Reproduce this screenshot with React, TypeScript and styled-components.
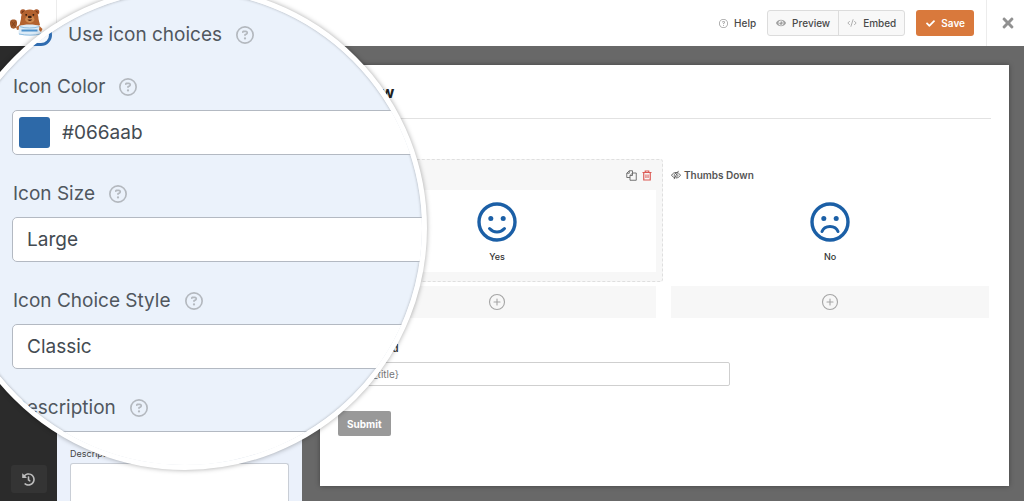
import React from "react";
import styled, { createGlobalStyle, css } from "styled-components";
import { FaCheck, FaEye, FaHistory, FaTimes } from "react-icons/fa";
import { FaRegCircleQuestion } from "react-icons/fa6";
import { CirclePlus, CodeXml } from "lucide-react";

const blue = "#1b5fa6";

const GlobalStyle = createGlobalStyle`
  *, *::before, *::after { box-sizing: border-box; }
  body {
    margin: 0;
    font-family: Inter, "Liberation Sans", sans-serif;
    font-size: 10px;
    color: #444;
    background: #fff;
  }
  button, input, select, textarea { font: inherit; color: inherit; margin: 0; }
  button { cursor: pointer; }
  svg { display: block; flex: none; }
`;

const Page = styled.div`
  position: relative;
  display: flex;
  flex-direction: column;
  height: 100vh;
  overflow: hidden;
`;

const Header = styled.header`
  display: flex;
  align-items: stretch;
  flex: none;
  height: 46px;
  background: #fff;
`;

const LogoBox = styled.div`
  width: 57px;
  padding: 7px 0 0 9px;
  border-right: 1px solid #ececec;
`;

const Toolbar = styled.div`
  display: flex;
  align-items: center;
  flex: 1;
  justify-content: flex-end;
  gap: 11px;
  padding-right: 12px;
`;

const toolButton = css`
  display: flex;
  align-items: center;
  gap: 6px;
  height: 26px;
  padding: 0 8px;
  border: 0;
  background: none;
  font-size: 10px;
  font-weight: 500;
  color: #4a4a4a;
  svg { color: #a0a0a0; }
`;

const ToolButton = styled.button`
  ${toolButton}
`;

const HelpLink = styled.a`
  ${toolButton}
  padding: 0;
  text-decoration: none;
`;

const ButtonGroup = styled.div`
  display: flex;
  border: 1px solid #dcdcdc;
  border-radius: 3px;
  background: #f8f8f8;
  ${ToolButton} { height: 24px; }
  ${ToolButton} + ${ToolButton} { border-left: 1px solid #dcdcdc; }
`;

const SaveButton = styled.button`
  ${toolButton}
  padding: 0 9px 0 10px;
  border-radius: 3px;
  background: #d9793c;
  color: #fff;
  font-weight: 600;
  svg { color: #fff; }
`;

const CloseButton = styled.button`
  display: flex;
  align-items: center;
  justify-content: center;
  width: 38px;
  padding: 0 0 0 4px;
  border: 0;
  border-left: 1px solid #ececec;
  background: none;
  svg { color: #919191; }
`;

const Body = styled.div`
  display: flex;
  flex: 1;
  min-height: 0;
`;

const Rail = styled.nav`
  display: flex;
  flex-direction: column;
  justify-content: flex-end;
  align-items: center;
  width: 57px;
  padding-bottom: 8px;
  background: #2b2b2b;
`;

const RailButton = styled.button`
  display: flex;
  align-items: center;
  justify-content: center;
  width: 36px;
  height: 28px;
  border: 0;
  border-radius: 3px;
  background: #343434;
  color: #bcbcbc;
`;

const Panel = styled.aside`
  display: flex;
  flex-direction: column;
  justify-content: flex-end;
  width: 245px;
  padding: 0 13px;
  background: #ebf1fb;
`;

const PanelLabel = styled.label`
  font-size: 9px;
  line-height: 12px;
  margin-bottom: 3px;
`;

const PanelText = styled.textarea`
  display: block;
  width: 100%;
  height: 38px;
  padding: 4px;
  border: 1px solid #c9ced6;
  border-bottom: 0;
  border-radius: 3px 3px 0 0;
  background: #fff;
  resize: none;
`;

const Canvas = styled.main`
  display: flex;
  flex: 1;
  min-width: 0;
  padding: 19px 15px 15px 18px;
  background: #686868;
`;

const Sheet = styled.section`
  flex: 1;
  min-width: 0;
  padding: 17px 18px;
  background: #fff;
  box-shadow: 0 0 5px rgba(0, 0, 0, 0.35);
`;

const FormTitle = styled.h1`
  margin: 0 0 40px;
  padding-bottom: 16px;
  border-bottom: 1px solid #e2e2e2;
  font-size: 16px;
  line-height: 20px;
  font-weight: 700;
  color: #222;
`;

const Columns = styled.div`
  display: flex;
  gap: 15px;
  padding-right: 2px;
`;

const Column = styled.div`
  display: flex;
  flex-direction: column;
  flex: 1;
  min-width: 0;
  gap: 4px;
`;

const FieldCard = styled.div<{ $selected?: boolean }>`
  height: 123px;
  margin: 0 -7px 0 -9px;
  padding: 0 6px 9px 8px;
  border: 1px dashed ${(p) => (p.$selected ? "#dfdfdf" : "transparent")};
  border-radius: 3px;
  background: ${(p) => (p.$selected ? "#f7f7f7" : "transparent")};
`;

const FieldHead = styled.div`
  display: flex;
  align-items: center;
  justify-content: space-between;
  height: 30px;
  padding-right: 4px;
`;

const FieldName = styled.span`
  display: flex;
  align-items: center;
  gap: 3px;
  font-size: 10px;
  font-weight: 600;
  color: #555;
`;

const FieldActions = styled.span`
  display: flex;
  gap: 5px;
`;

const IconButton = styled.button`
  padding: 0;
  border: 0;
  background: none;
`;

const Choice = styled.div`
  display: flex;
  flex-direction: column;
  align-items: center;
  gap: 9px;
  height: 82px;
  padding-top: 12px;
  background: #fff;
  font-size: 9px;
  line-height: 12px;
  font-weight: 500;
  color: #333;
  svg { color: ${blue}; }
`;

const AddButton = styled.button`
  display: flex;
  align-items: center;
  justify-content: center;
  height: 32px;
  padding: 0;
  border: 0;
  background: #f7f7f7;
  color: #a6a6a6;
`;

const FieldLabel = styled.label`
  display: block;
  margin: 23px 0 7px;
  font-size: 10px;
  line-height: 14px;
  font-weight: 600;
  color: #333;
`;

const TextInput = styled.input`
  display: block;
  width: 60%;
  height: 24px;
  padding: 0 6px;
  border: 1px solid #cfcfcf;
  border-radius: 2px;
  background: #fff;
  font-size: 10px;
  color: #777;
`;

const SubmitButton = styled.button`
  display: block;
  height: 25px;
  margin-top: 25px;
  padding: 0 9px;
  border: 0;
  border-radius: 2px;
  background: #999;
  color: #fff;
  font-size: 10px;
  font-weight: 700;
`;

/* Round magnifier that floats over the builder */
const Lens = styled.div`
  position: absolute;
  left: -57px;
  top: -14px;
  width: 484px;
  height: 484px;
  border: 5px solid #fff;
  border-radius: 50%;
  overflow: hidden;
  background: #ebf2fb;
  box-shadow: 0 0 5px rgba(0, 0, 0, 0.35), inset 0 0 3px rgba(0, 0, 0, 0.3);
  padding: 31px 0 0 65px;
  color: #50575e;
`;

const LensRow = styled.div`
  display: flex;
  align-items: center;
  gap: 14px;
  height: 26px;
  font-size: 19px;
  line-height: 26px;
  svg { color: #b4b9bf; }
`;

const Toggle = styled.input`
  appearance: none;
  && { margin-right: 2px; }
  width: 39px;
  height: 22px;
  border: 3px solid #2f6cb0;
  border-radius: 11px;
  background: #f4f8fd;
`;

const LensField = styled.div`
  margin-top: 26px;
`;

const LensBox = styled.div`
  display: flex;
  align-items: center;
  gap: 12px;
  height: 45px;
  margin: 10px -20px 0 -1px;
  padding: 0 6px;
  border: 1px solid #b3b9c2;
  border-radius: 5px;
  background: #fff;
  font-size: 19px;
  color: #444b52;
`;

const Swatch = styled.span`
  width: 31px;
  height: 31px;
  border-radius: 3px;
  background: #2d69a8;
`;

const LensInput = styled.input`
  flex: 1;
  min-width: 0;
  padding: 0;
  border: 0;
  outline: 0;
  background: none;
`;

const LensSelect = styled.select`
  flex: 1;
  appearance: none;
  padding: 0 8px;
  border: 0;
  outline: 0;
  background: none;
`;

const Bear = () => (
  <svg width="34" height="30" viewBox="0 0 34 30" role="img" aria-label="WPForms">
    <path d="M1.5 13.5c1-1.5 5-1.5 6 0 1 2 .5 5-.5 7-1 1.500-4 1.500-5 0-1-2-1.500-5-.5-7z" fill="#a35a2c" />
    <path d="M2.500 14.500l4 5M6.500 14.500l-4 5" stroke="#7a3d1b" strokeWidth="0.800" />
    <path d="M7 20l5-3 1 5-5 1z" fill="#b9652f" />
    <circle cx="14" cy="5" r="2.800" fill="#a85527" />
    <circle cx="27.500" cy="5" r="2.800" fill="#a85527" />
    <circle cx="14.200" cy="5.300" r="1.300" fill="#6f3517" />
    <circle cx="27.300" cy="5.300" r="1.300" fill="#6f3517" />
    <path d="M12 12c0-6 3-9.500 8.800-9.500S29.500 6 29.500 12l1.500 6c-3 3-17 3-20.500 0z" fill="#b3622f" />
    <ellipse cx="20.800" cy="12.300" rx="4.600" ry="3.600" fill="#cf8a50" />
    <circle cx="17.200" cy="7.800" r="0.900" fill="#2a1a12" />
    <circle cx="24.400" cy="7.800" r="0.900" fill="#2a1a12" />
    <ellipse cx="20.800" cy="10" rx="2" ry="1.300" fill="#3a2014" />
    <path d="M18.500 12.500c1.500 2 3.200 2 4.700 0z" fill="#5a2a18" />
    <path d="M10 19c5-2 16-2 21 0l1.500 8c-7 2-17 2-23 0z" fill="#dcebf7" />
    <path d="M12.500 23.500h16" stroke="#4f93cd" strokeWidth="2" />
    <path d="M10.500 19.500c5 2 15 2 20 0M10 27c7 1.500 15 1.500 22 0" stroke="#8dbce0" fill="none" />
    <path d="M30.500 19l3 3-1.500 3-2-2z" fill="#b9652f" />
  </svg>
);

const Face = ({ mouth }: { mouth: string }) => (
  <svg width="40" height="40" viewBox="0 0 40 40" fill="none" stroke="currentColor" strokeWidth="3.4">
    <circle cx="20" cy="20" r="18" />
    <path d={mouth} strokeWidth="3" strokeLinecap="round" />
    <circle cx="13.8" cy="16.6" r="2.500" fill="currentColor" stroke="none" />
    <circle cx="26.200" cy="16.6" r="2.500" fill="currentColor" stroke="none" />
  </svg>
);

const HiddenEyeIcon = () => (
  <svg width="10" height="10" viewBox="0 0 20 20" fill="none" stroke="currentColor" strokeWidth="1.800" strokeLinecap="round">
    <path d="M7.500 15.400C4.500 14.500 2.300 12.500 1 10.500 3 7 6.300 5 10 5h1.500" />
    <path d="M10.500 16c3.800-.3 6.700-2.500 8.500-5.500-.9-1.600-2.200-3-3.800-4" />
    <path d="M14.500 2.500l-8 15" />
    <path d="M7 12.500c-1.500-2.500-.3-5.500 2.500-6M13.800 9.500c.3 2-.7 3.500-2.300 4.200" />
  </svg>
);

const CopyIcon = () => (
  <svg width="11" height="11" viewBox="0 0 22 22" fill="none" stroke="#666" strokeWidth="1.800" strokeLinejoin="round">
    <path d="M8 15H1.500V6.500L6.500 1.500H13V6" />
    <path d="M6.500 1.500v5h-5" />
    <path d="M13 6h7.500v14.500H8V11z" />
    <path d="M13 6v5H8" />
  </svg>
);

const TrashIcon = () => (
  <svg width="10" height="11" viewBox="0 0 20 22" fill="none" stroke="#dc5a55" strokeWidth="2.400">
    <path d="M1 5h18M6.500 5V2h7v3M3.500 5v15h13V5" />
    <path d="M7.500 9v7M10 9v7M12.500 9v7" strokeWidth="1.500" />
  </svg>
);

const LensLabel = ({ htmlFor, children }: { htmlFor: string; children: React.ReactNode }) => (
  <LensRow>
    <label htmlFor={htmlFor}>{children}</label>
    <FaRegCircleQuestion size={18} />
  </LensRow>
);

export default function App() {
  return (
    <>
      <GlobalStyle />
      <Page>
        <Header>
          <LogoBox>
            <Bear />
          </LogoBox>
          <Toolbar>
            <HelpLink href="#help">
              <FaRegCircleQuestion size={9} />
              Help
            </HelpLink>
            <ButtonGroup>
              <ToolButton type="button">
                <FaEye size={10} />
                Preview
              </ToolButton>
              <ToolButton type="button">
                <CodeXml size={10} />
                Embed
              </ToolButton>
            </ButtonGroup>
            <SaveButton type="button">
              <FaCheck size={9} />
              Save
            </SaveButton>
          </Toolbar>
          <CloseButton type="button" aria-label="Close">
            <FaTimes size={16} />
          </CloseButton>
        </Header>
        <Body>
          <Rail>
            <RailButton type="button" aria-label="Revisions">
              <FaHistory size={13} />
            </RailButton>
          </Rail>
          <Panel>
            <PanelLabel htmlFor="panel-description">Description</PanelLabel>
            <PanelText id="panel-description" />
          </Panel>
          <Canvas>
            <Sheet>
              <FormTitle>Review</FormTitle>
              <Columns>
                <Column>
                  <FieldCard $selected>
                    <FieldHead>
                      <FieldName>
                        <HiddenEyeIcon />
                        Thumbs Up
                      </FieldName>
                      <FieldActions>
                        <IconButton type="button" aria-label="Duplicate">
                          <CopyIcon />
                        </IconButton>
                        <IconButton type="button" aria-label="Delete">
                          <TrashIcon />
                        </IconButton>
                      </FieldActions>
                    </FieldHead>
                    <Choice>
                      <Face mouth="M12.500 26.500c4 4.500 11 4.500 15 0" />
                      Yes
                    </Choice>
                  </FieldCard>
                  <AddButton type="button" aria-label="Add field to first column">
                    <CirclePlus size={18} strokeWidth={1.5} />
                  </AddButton>
                </Column>
                <Column>
                  <FieldCard>
                    <FieldHead>
                      <FieldName>
                        <HiddenEyeIcon />
                        Thumbs Down
                      </FieldName>
                    </FieldHead>
                    <Choice>
                      <Face mouth="M12 29.500c2.500-6.800 13.500-6.800 16 0" />
                      No
                    </Choice>
                  </FieldCard>
                  <AddButton type="button" aria-label="Add field to second column">
                    <CirclePlus size={18} strokeWidth={1.5} />
                  </AddButton>
                </Column>
              </Columns>
              <FieldLabel htmlFor="hidden-field">Hidden Field</FieldLabel>
              <TextInput id="hidden-field" defaultValue="{page_title}" />
              <SubmitButton type="button">Submit</SubmitButton>
            </Sheet>
          </Canvas>
        </Body>
        <Lens>
          <LensRow>
            <Toggle type="checkbox" id="use-icons" defaultChecked />
            <label htmlFor="use-icons">Use icon choices</label>
            <FaRegCircleQuestion size={18} />
          </LensRow>
          <LensField>
            <LensLabel htmlFor="icon-color">Icon Color</LensLabel>
            <LensBox>
              <Swatch />
              <LensInput id="icon-color" defaultValue="#066aab" />
            </LensBox>
          </LensField>
          <LensField>
            <LensLabel htmlFor="icon-size">Icon Size</LensLabel>
            <LensBox>
              <LensSelect id="icon-size">
                <option>Large</option>
              </LensSelect>
            </LensBox>
          </LensField>
          <LensField>
            <LensLabel htmlFor="icon-style">Icon Choice Style</LensLabel>
            <LensBox>
              <LensSelect id="icon-style">
                <option>Classic</option>
              </LensSelect>
            </LensBox>
          </LensField>
          <LensField>
            <LensLabel htmlFor="lens-description">Description</LensLabel>
            <LensBox>
              <LensInput id="lens-description" />
            </LensBox>
          </LensField>
        </Lens>
      </Page>
    </>
  );
}
